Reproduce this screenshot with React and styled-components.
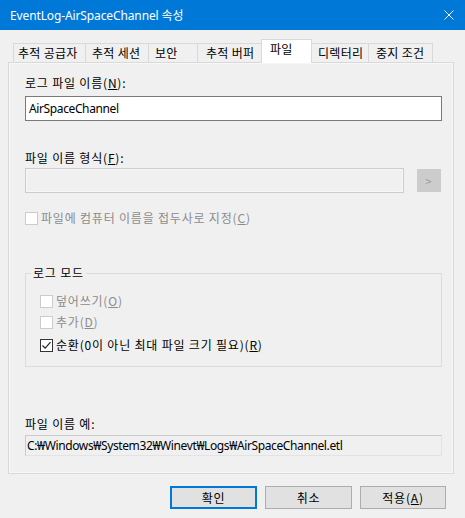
import React from "react";
import styled, { createGlobalStyle } from "styled-components";

const GlobalStyle = createGlobalStyle`
  html, body {
    margin: 0;
    padding: 0;
    background: #f0f0f0;
  }
  body {
    font-family: "Noto Sans CJK KR", "Noto Sans", sans-serif;
    font-size: 12px;
    letter-spacing: 0.8px;
    color: #000;
  }
  #root {
    width: 465px;
    height: 518px;
    overflow: hidden;
  }
`;

const latin = `
  font-family: "Noto Sans", "Noto Sans CJK KR", sans-serif;
  letter-spacing: -0.38px;
`;

const StyledWindow = styled.div`
  width: 465px;
  height: 518px;
  display: flex;
  flex-direction: column;
  background: #f0f0f0;
`;

const StyledTitleBar = styled.header`
  height: 30px;
  flex: none;
  display: flex;
  align-items: center;
  justify-content: space-between;
  padding: 0 11px 0 10px;
  background: #0078d7;
  color: #fff;
  font-family: "Noto Sans", "Noto Sans CJK KR", sans-serif;
  font-size: 12px;
  letter-spacing: -0.12px;
`;

const StyledBody = styled.div`
  padding: 0 11px 0 8px;
  display: flex;
  flex-direction: column;
`;

const StyledTabStrip = styled.div`
  height: 24px;
  margin: 9px 0 -1px 5px;
  display: flex;
  align-items: flex-start;
  position: relative;
  z-index: 1;
`;

const StyledTab = styled.div`
  box-sizing: border-box;
  width: ${(p) => p.$w}px;
  height: ${(p) => (p.$active ? 24 : 19)}px;
  margin-top: ${(p) => (p.$active ? 0 : 4)}px;
  margin-left: ${(p) => (p.$first ? 0 : -1)}px;
  padding: ${(p) => (p.$active ? "1px 0 0" : "0")} ${(p) => p.$pad}px;
  display: flex;
  align-items: ${(p) => (p.$active ? "flex-start" : "center")};
  border: 1px solid #d9d9d9;
  border-bottom: none;
  background: ${(p) => (p.$active ? "#ffffff" : "#f0f0f0")};
  line-height: 16px;
  letter-spacing: 0.3px;
  white-space: nowrap;
  position: relative;
  z-index: ${(p) => (p.$active ? 2 : 1)};
`;

const StyledPanel = styled.section`
  box-sizing: border-box;
  height: 412px;
  padding: 12px 11px 0 16px;
  display: flex;
  flex-direction: column;
  border: 1px solid #d9d9d9;
  box-shadow: inset 0 0 0 1px #f7f7f7;
  background: #f0f0f0;
`;

const StyledLabel = styled.div`
  line-height: 16px;
  height: 16px;
  margin-top: ${(p) => p.$mt || 0}px;
  white-space: nowrap;
`;

const StyledTextBox = styled.div`
  ${latin}
  box-sizing: border-box;
  height: 25px;
  margin-top: 5px;
  padding: 0 3px;
  display: flex;
  align-items: center;
  border: 1px solid #7a7a7a;
  background: #fff;
`;

const StyledDisabledRow = styled.div`
  display: flex;
  align-items: center;
  gap: 13px;
  margin: 2px 1px 0 0;
`;

const StyledDisabledBox = styled.div`
  box-sizing: border-box;
  flex: 1;
  height: 25px;
  border: 1px solid #cccccc;
  box-shadow: inset 0 0 0 1px #f7f7f7;
  background: #f0f0f0;
`;

const StyledArrowButton = styled.div`
  width: 24px;
  height: 23px;
  display: flex;
  align-items: center;
  justify-content: center;
  background: #cccccc;
  color: #9a9a9a;
  font-size: 11px;
`;

const StyledCheckRow = styled.div`
  display: flex;
  align-items: center;
  gap: 3px;
  line-height: 16px;
  height: 16px;
  margin-top: ${(p) => p.$mt || 0}px;
  color: ${(p) => (p.$disabled ? "#8c8c8c" : "#000")};
  white-space: nowrap;
`;

const StyledBox = styled.span`
  box-sizing: border-box;
  width: 13px;
  height: 13px;
  flex: none;
  display: flex;
  border: 1px solid ${(p) => (p.$disabled ? "#cccccc" : "#333333")};
  background: #fff;
`;

const StyledGroup = styled.fieldset`
  margin: 39px 0 0;
  padding: 12px 10px 13px 14px;
  border: 1px solid #dcdcdc;
  min-width: 0;
`;

const StyledLegend = styled.legend`
  padding: 0 2px;
  margin-left: -9px;
  line-height: 16px;
`;

const StyledExampleBox = styled.div`
  ${latin}
  box-sizing: border-box;
  height: 21px;
  margin-top: 3px;
  padding: 0 1px;
  display: flex;
  align-items: center;
  border: 1px solid #cbcbcb;
  border-right-color: #e3e3e3;
  border-bottom-color: #e3e3e3;
  background: #f0f0f0;
  white-space: nowrap;
  overflow: hidden;
`;

const StyledButtonRow = styled.div`
  display: flex;
  justify-content: flex-end;
  gap: 8px;
  margin-top: 12px;
  padding-right: 8px;
`;

const StyledButton = styled.div`
  box-sizing: border-box;
  width: ${(p) => p.$w}px;
  height: 23px;
  display: flex;
  align-items: center;
  justify-content: center;
  border: ${(p) => (p.$default ? "2px solid #0078d7" : "1px solid #adadad")};
  background: #e1e1e1;
  line-height: 16px;
`;

const tabs = [
  { label: "추적 공급자", w: 73, pad: 4 },
  { label: "추적 세션", w: 64, pad: 6 },
  { label: "보안", w: 50, pad: 6 },
  { label: "추적 버퍼", w: 65, pad: 8 },
  { label: "파일", w: 51, pad: 8, active: true },
  { label: "디렉터리", w: 58, pad: 6 },
  { label: "중지 조건", w: 65, pad: 7 },
];

const CloseIcon = () => (
  <svg width="10" height="10" viewBox="0 0 10 10">
    <path d="M0.5 0.5 L9.5 9.5 M9.5 0.5 L0.5 9.5" stroke="#fff" strokeWidth="1" />
  </svg>
);

const CheckMark = () => (
  <svg width="11" height="11" viewBox="0 0 11 11">
    <path d="M1.5 5.5 L4.2 8.2 L9.5 2.2" fill="none" stroke="#222" strokeWidth="1.2" />
  </svg>
);

const CheckBox = ({ checked, disabled, children, mt }) => (
  <StyledCheckRow $disabled={disabled} $mt={mt}>
    <StyledBox $disabled={disabled}>{checked && <CheckMark />}</StyledBox>
    <span>{children}</span>
  </StyledCheckRow>
);

const App = () => {
  return (
    <StyledWindow>
      <GlobalStyle />
      <StyledTitleBar>
        <span>EventLog-AirSpaceChannel 속성</span>
        <CloseIcon />
      </StyledTitleBar>

      <StyledBody>
        <StyledTabStrip>
          {tabs.map((tab, i) => (
            <StyledTab
              key={tab.label}
              $w={tab.w}
              $pad={tab.pad}
              $active={tab.active}
              $first={i === 0}
            >
              {tab.label}
            </StyledTab>
          ))}
        </StyledTabStrip>

        <StyledPanel>
          <StyledLabel>
            로그 파일 이름(<u>N</u>):
          </StyledLabel>
          <StyledTextBox>AirSpaceChannel</StyledTextBox>

          <StyledLabel $mt={29}>
            파일 이름 형식(<u>F</u>):
          </StyledLabel>
          <StyledDisabledRow>
            <StyledDisabledBox />
            <StyledArrowButton>&gt;</StyledArrowButton>
          </StyledDisabledRow>

          <CheckBox disabled mt={17}>
            파일에 컴퓨터 이름을 접두사로 지정(<u>C</u>)
          </CheckBox>

          <StyledGroup>
            <StyledLegend>로그 모드</StyledLegend>
            <CheckBox disabled>
              덮어쓰기(<u>O</u>)
            </CheckBox>
            <CheckBox disabled mt={5}>
              추가(<u>D</u>)
            </CheckBox>
            <CheckBox checked mt={7}>
              순환(0이 아닌 최대 파일 크기 필요)(<u>R</u>)
            </CheckBox>
          </StyledGroup>

          <StyledLabel $mt={49}>파일 이름 예:</StyledLabel>
          <StyledExampleBox>
            C:₩Windows₩System32₩Winevt₩Logs₩AirSpaceChannel.etl
          </StyledExampleBox>
        </StyledPanel>

        <StyledButtonRow>
          <StyledButton $w={87} $default>
            확인
          </StyledButton>
          <StyledButton $w={87}>취소</StyledButton>
          <StyledButton $w={86}>
            적용(<u>A</u>)
          </StyledButton>
        </StyledButtonRow>
      </StyledBody>
    </StyledWindow>
  );
};

export default App;
